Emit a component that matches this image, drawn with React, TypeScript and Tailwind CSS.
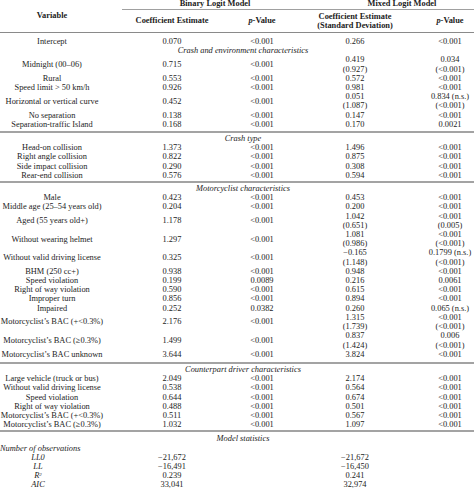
type Cell = string | [string, string];

type Row = {
  label: string;
  b: string;
  bp: string;
  m: Cell;
  mp: Cell;
};

type Section = {
  title: string;
  rows: Row[];
};

const intercept: Row = { label: "Intercept", b: "0.070", bp: "<0.001", m: "0.266", mp: "<0.001" };

const crashEnv: Row[] = [
  { label: "Midnight (00–06)", b: "0.715", bp: "<0.001", m: ["0.419", "(0.927)"], mp: ["0.034", "(<0.001)"] },
  { label: "Rural", b: "0.553", bp: "<0.001", m: "0.572", mp: "<0.001" },
  { label: "Speed limit > 50 km/h", b: "0.926", bp: "<0.001", m: "0.981", mp: "<0.001" },
  { label: "Horizontal or vertical curve", b: "0.452", bp: "<0.001", m: ["0.051", "(1.087)"], mp: ["0.834 (n.s.)", "(<0.001)"] },
  { label: "No separation", b: "0.138", bp: "<0.001", m: "0.147", mp: "<0.001" },
  { label: "Separation-traffic Island", b: "0.168", bp: "<0.001", m: "0.170", mp: "0.0021" },
];

const blocks: Section[] = [
  {
    title: "Crash type",
    rows: [
      { label: "Head-on collision", b: "1.373", bp: "<0.001", m: "1.496", mp: "<0.001" },
      { label: "Right angle collision", b: "0.822", bp: "<0.001", m: "0.875", mp: "<0.001" },
      { label: "Side impact collision", b: "0.290", bp: "<0.001", m: "0.308", mp: "<0.001" },
      { label: "Rear-end collision", b: "0.576", bp: "<0.001", m: "0.594", mp: "<0.001" },
    ],
  },
  {
    title: "Motorcyclist characteristics",
    rows: [
      { label: "Male", b: "0.423", bp: "<0.001", m: "0.453", mp: "<0.001" },
      { label: "Middle age (25–54 years old)", b: "0.204", bp: "<0.001", m: "0.200", mp: "<0.001" },
      { label: "Aged (55 years old+)", b: "1.178", bp: "<0.001", m: ["1.042", "(0.651)"], mp: ["<0.001", "(0.005)"] },
      { label: "Without wearing helmet", b: "1.297", bp: "<0.001", m: ["1.081", "(0.986)"], mp: ["<0.001", "(<0.001)"] },
      { label: "Without valid driving license", b: "0.325", bp: "<0.001", m: ["−0.165", "(1.148)"], mp: ["0.1799 (n.s.)", "(<0.001)"] },
      { label: "BHM (250 cc+)", b: "0.938", bp: "<0.001", m: "0.948", mp: "<0.001" },
      { label: "Speed violation", b: "0.199", bp: "0.0089", m: "0.216", mp: "0.0061" },
      { label: "Right of way violation", b: "0.590", bp: "<0.001", m: "0.615", mp: "<0.001" },
      { label: "Improper turn", b: "0.856", bp: "<0.001", m: "0.894", mp: "<0.001" },
      { label: "Impaired", b: "0.252", bp: "0.0382", m: "0.260", mp: "0.065 (n.s.)" },
      { label: "Motorcyclist’s BAC (+<0.3%)", b: "2.176", bp: "<0.001", m: ["1.315", "(1.739)"], mp: ["<0.001", "(<0.001)"] },
      { label: "Motorcyclist’s BAC (≥0.3%)", b: "1.499", bp: "<0.001", m: ["0.837", "(1.424)"], mp: ["0.006", "(<0.001)"] },
      { label: "Motorcyclist’s BAC unknown", b: "3.644", bp: "<0.001", m: "3.824", mp: "<0.001" },
    ],
  },
  {
    title: "Counterpart driver characteristics",
    rows: [
      { label: "Large vehicle (truck or bus)", b: "2.049", bp: "<0.001", m: "2.174", mp: "<0.001" },
      { label: "Without valid driving license", b: "0.538", bp: "<0.001", m: "0.564", mp: "<0.001" },
      { label: "Speed violation", b: "0.644", bp: "<0.001", m: "0.674", mp: "<0.001" },
      { label: "Right of way violation", b: "0.488", bp: "<0.001", m: "0.501", mp: "<0.001" },
      { label: "Motorcyclist’s BAC (+<0.3%)", b: "0.511", bp: "<0.001", m: "0.567", mp: "<0.001" },
      { label: "Motorcyclist’s BAC (≥0.3%)", b: "1.032", bp: "<0.001", m: "1.097", mp: "<0.001" },
    ],
  },
];

const stats = [
  { label: "LL0", b: "−21,672", m: "−21,672" },
  { label: "LL", b: "−16,491", m: "−16,450" },
  { label: "R2", b: "0.239", m: "0.241" },
  { label: "AIC", b: "33,041", m: "32,974" },
];

// column centres in the reference: 52 / 172 / 262 / 355 / 450
const grid = "grid grid-cols-[104px_136px_44px_142px_48px] items-center text-center";

function Val({ v }: { v: Cell }) {
  if (typeof v === "string") return <div className="whitespace-nowrap">{v}</div>;
  return (
    <div className="flex flex-col whitespace-nowrap">
      <span>{v[0]}</span>
      <span>{v[1]}</span>
    </div>
  );
}

function DataRow({ r }: { r: Row }) {
  return (
    <div className={grid}>
      <div className="whitespace-nowrap">{r.label}</div>
      <div>{r.b}</div>
      <div>{r.bp}</div>
      <Val v={r.m} />
      <Val v={r.mp} />
    </div>
  );
}

function SectionTitle({ children }: { children: string }) {
  return <div className="w-[486px] text-center italic">{children}</div>;
}

const rule = "h-[2px] w-full bg-[#a3a3a3]";

export default function App() {
  return (
    <div className="h-[491px] w-[474px] overflow-hidden bg-white font-['Liberation_Serif',serif] text-[8.4px] leading-[9.2px] text-[#1c1c1c]">
      <div className="w-[496px]">
        {/* head */}
        <div className="flex h-[33px] border-b border-[#8a8a8a]">
          <div className="flex w-[104px] items-center justify-center pb-px font-bold">Variable</div>
          <div className="flex flex-1 flex-col">
            <div className="flex h-[10px] font-bold">
              <div className="w-[18px]" />
              <div className="flex flex-1 border-b border-[#a0a0a0]">
                <div className="w-[186px] text-center leading-[8px]">Binary Logit Model</div>
                <div className="flex-1 text-center leading-[8px]">Mixed Logit Model</div>
              </div>
            </div>
            <div className="grid flex-1 grid-cols-[136px_44px_142px_48px] items-center text-center font-bold">
              <div>Coefficient Estimate</div>
              <div className="whitespace-nowrap">
                <i>p</i>-Value
              </div>
              <div className="flex flex-col whitespace-nowrap">
                <span>Coefficient Estimate</span>
                <span>(Standard Deviation)</span>
              </div>
              <div className="whitespace-nowrap">
                <i>p</i>-Value
              </div>
            </div>
          </div>
        </div>

        {/* crash and environment */}
        <div className="pt-[4px] pb-[2px]">
          <DataRow r={intercept} />
          <SectionTitle>Crash and environment characteristics</SectionTitle>
          {crashEnv.map((r) => (
            <DataRow key={r.label} r={r} />
          ))}
        </div>
        <div className={rule} />

        {blocks.map((s, i) => (
          <div key={s.title}>
            <div className={i === 1 ? "pt-px pb-[3px]" : "pt-px pb-px"}>
              <SectionTitle>{s.title}</SectionTitle>
              {s.rows.map((r) => (
                <DataRow key={r.label} r={r} />
              ))}
            </div>
            <div className={rule} />
          </div>
        ))}

        {/* model statistics */}
        <div className="pt-[2px]">
          <SectionTitle>Model statistics</SectionTitle>
          <div className="w-[78px] whitespace-nowrap text-center italic">Number of observations</div>
          {stats.map((s) => (
            <div key={s.label} className={grid}>
              <div className="w-[76px] italic">
                {s.label === "R2" ? (
                  <>
                    R<sup className="text-[5px]">2</sup>
                  </>
                ) : (
                  s.label
                )}
              </div>
              <div>{s.b}</div>
              <div />
              <div>{s.m}</div>
              <div />
            </div>
          ))}
        </div>
      </div>
    </div>
  );
}
